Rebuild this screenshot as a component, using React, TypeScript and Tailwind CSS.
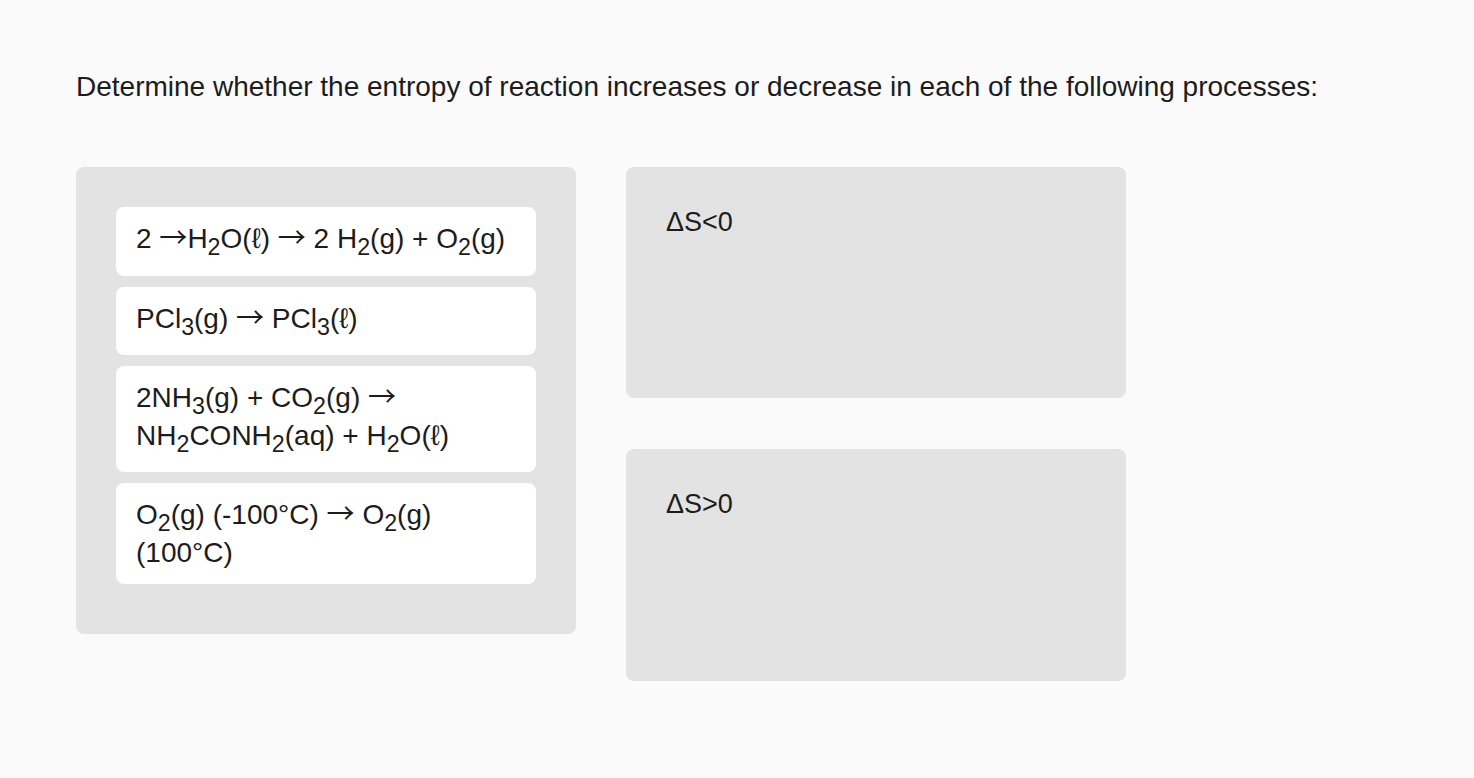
import React from "react";

const font = { fontFamily: '"Liberation Sans", Arial, sans-serif' };

function Sub({ children }: { children: React.ReactNode }) {
  return <sub className="static align-sub text-[83%] leading-[normal]">{children}</sub>;
}

function Ar() {
  return <span style={{ fontFamily: '"Noto Sans CJK SC", sans-serif' }} className="leading-none">→</span>;
}

function Card({ children }: { children: React.ReactNode }) {
  return (
    <div className="rounded-lg bg-white px-5 py-[15px] text-[28px] leading-[normal] text-[#1c1c1c]">
      {children}
    </div>
  );
}

export default function App() {
  return (
    <div className="min-h-[778px] w-full bg-[#fafafa] text-[#1c1c1c]" style={font}>
      <div className="px-[76px] pt-[67px]">
        <p className="text-[28px] leading-[40px]">
          Determine whether the entropy of reaction increases or decrease in each of the following processes:
        </p>
        <div className="mt-[60px] flex items-start gap-[50px]">
          <div className="flex w-[500px] flex-col gap-[11px] rounded-lg bg-[#e3e3e3] px-10 pb-[50px] pt-10">
            <Card>
              2 <Ar />H<Sub>2</Sub>O(ℓ) <Ar /> 2 H<Sub>2</Sub>(g) + O<Sub>2</Sub>(g)
            </Card>
            <Card>
              PCl<Sub>3</Sub>(g) <Ar /> PCl<Sub>3</Sub>(ℓ)
            </Card>
            <Card>
              2NH<Sub>3</Sub>(g) + CO<Sub>2</Sub>(g) <Ar />
              <br />
              NH<Sub>2</Sub>CONH<Sub>2</Sub>(aq) + H<Sub>2</Sub>O(ℓ)
            </Card>
            <Card>
              O<Sub>2</Sub>(g) (-100°C) <Ar /> O<Sub>2</Sub>(g)
              <br />
              (100°C)
            </Card>
          </div>
          <div className="flex w-[500px] flex-col gap-[51px]">
            <div className="h-[231px] rounded-lg bg-[#e3e3e3] px-10 pt-[35px] text-[27px] leading-[40px]">
              ΔS&lt;0
            </div>
            <div className="h-[232px] rounded-lg bg-[#e3e3e3] px-10 pt-[35px] text-[27px] leading-[40px]">
              ΔS&gt;0
            </div>
          </div>
        </div>
      </div>
    </div>
  );
}
